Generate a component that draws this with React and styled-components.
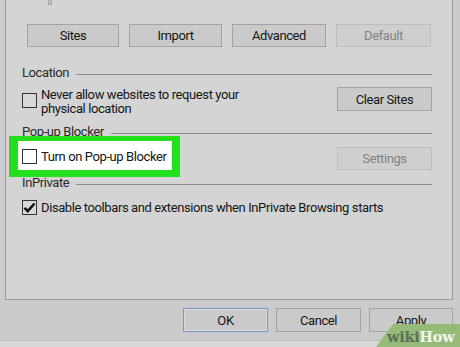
import React from "react";
import styled, { createGlobalStyle, css } from "styled-components";

const Global = createGlobalStyle`
  html, body { margin: 0; padding: 0; }
  body {
    width: 460px;
    height: 347px;
    overflow: hidden;
    background: #cacaca;
    font-family: Roboto, "Segoe UI", sans-serif;
    font-size: 13px;
    letter-spacing: -0.4px;
    color: #161616;
  }
`;

const Page = styled.div`
  position: relative;
  width: 460px;
  height: 347px;
  display: flex;
  flex-direction: column;
  background: #cbcbcb;
  overflow: hidden;
`;

const Panel = styled.div`
  box-sizing: border-box;
  margin-left: 5px;
  width: 448px;
  height: 300px;
  background: #d4d4d4;
  border: 1px solid #9a9a9a;
  border-top: none;
  padding: 0 20px 0 16px;
  display: flex;
  flex-direction: column;
`;

const Stub = styled.div`
  margin-left: 26px;
  width: 4px;
  height: 5px;
  background: #bdbdbd;
  border: 1px solid #a8a8a8;
  border-top: none;
  box-sizing: border-box;
`;

const ButtonRow = styled.div`
  display: flex;
  gap: 10px;
  margin-top: 19px;
  padding-left: 5px;
`;

const Button = styled.div`
  box-sizing: border-box;
  width: ${(p) => p.$w || 93}px;
  height: ${(p) => p.$h || 23}px;
  display: flex;
  align-items: center;
  justify-content: center;
  background: #cacaca;
  border: 1px solid #a3a3a3;
  color: #161616;
  margin-top: ${(p) => p.$mt || 0}px;
  ${(p) =>
    p.$disabled &&
    css`
      background: #cfcfcf;
      border-color: #bdbdbd;
      color: #838383;
    `}
  ${(p) =>
    p.$focus &&
    css`
      border-color: #7b97c6;
      box-shadow: inset 0 0 0 1px #d6dbe3;
    `}
`;

const Header = styled.div`
  display: flex;
  align-items: center;
  gap: 7px;
  height: 12px;
  line-height: 12px;
  margin-top: ${(p) => p.$mt}px;
  color: #2a2a2a;
  &::after {
    content: "";
    flex: 1;
    height: 1px;
    background: #8c8c8c;
    margin-top: 2px;
  }
`;

const Row = styled.div`
  display: flex;
  justify-content: space-between;
  align-items: ${(p) => p.$align || "flex-start"};
  margin-top: ${(p) => p.$mt}px;
`;

const CheckItem = styled.div`
  display: flex;
  align-items: ${(p) => p.$align || "center"};
  gap: 4px;
  padding-top: ${(p) => p.$pt || 0}px;
`;

const Box = styled.div`
  box-sizing: border-box;
  flex: none;
  width: 15px;
  height: 15px;
  border: 1px solid #333;
  background: ${(p) => (p.$white ? "#fff" : "#d8d8d8")};
  margin-top: ${(p) => p.$mt || 0}px;
  display: flex;
  align-items: center;
  justify-content: center;
`;

const Label = styled.div`
  line-height: ${(p) => p.$lh || 14}px;
  white-space: nowrap;
`;

const Highlight = styled.div`
  box-sizing: border-box;
  width: 171px;
  height: 41px;
  margin-left: -13px;
  background: #fff;
  border-style: solid;
  border-color: #22e01c;
  border-width: 5px 8px 7px 9px;
  padding: 2px 0 0 4px;
  display: flex;
  align-items: center;
`;

const Footer = styled.div`
  display: flex;
  justify-content: flex-end;
  gap: 8px;
  margin-top: 8px;
  padding-right: 7px;
`;

const Strip = styled.div`
  margin-top: 8px;
  flex: 1;
  background: #d7d7d7;
  border-top: 1px solid #bcbcbc;
`;

const Logo = styled.div`
  position: absolute;
  right: 0;
  bottom: 0;
  width: 84px;
  height: 23px;
  background: #96bb78;
  clip-path: polygon(17px 0, 100% 0, 100% 100%, 0 100%);
  display: flex;
  align-items: center;
  padding: 1px 0 0 11px;
  box-sizing: border-box;
  font-family: "DejaVu Serif", "Liberation Serif", serif;
  font-weight: bold;
  font-size: 14.5px;
  letter-spacing: -0.3px;
`;

const Wiki = styled.span`
  color: #5f6f55;
`;
const How = styled.span`
  color: #f4f7f0;
`;

const Check = () => (
  <svg width="13" height="13" viewBox="0 0 13 13">
    <path d="M1.5 6.8 L4.8 10.2 L11.5 2.5" fill="none" stroke="#111" strokeWidth="2.6" />
  </svg>
);

export default function App() {
  return (
    <>
      <Global />
      <Page>
        <Panel>
          <Stub />
          <ButtonRow>
            <Button $w={92}>Sites</Button>
            <Button>Import</Button>
            <Button $w={94}>Advanced</Button>
            <Button $w={95} $disabled>Default</Button>
          </ButtonRow>

          <Header $mt={20}>Location</Header>
          <Row $mt={8}>
            <CheckItem $align="flex-start" $pt={1}>
              <Box $mt={5} />
              <Label>
                Never allow websites to request your
                <br />
                physical location
              </Label>
            </CheckItem>
            <Button $w={95} $h={24}>Clear Sites</Button>
          </Row>

          <Header $mt={10}>Pop-up Blocker</Header>
          <Row $mt={-2}>
            <Highlight>
              <CheckItem>
                <Box $white />
                <Label>Turn on Pop-up Blocker</Label>
              </CheckItem>
            </Highlight>
            <Button $w={95} $mt={11} $disabled>Settings</Button>
          </Row>

          <Header $mt={0}>InPrivate</Header>
          <Row $mt={11} $align="center">
            <CheckItem>
              <Box>
                <Check />
              </Box>
              <Label>Disable toolbars and extensions when InPrivate Browsing starts</Label>
            </CheckItem>
          </Row>
        </Panel>

        <Footer>
          <Button $w={85} $h={24} $focus>OK</Button>
          <Button $w={85} $h={24}>Cancel</Button>
          <Button $w={84} $h={24}>Apply</Button>
        </Footer>
        <Strip />
        <Logo>
          <Wiki>wiki</Wiki>
          <How>How</How>
        </Logo>
      </Page>
    </>
  );
}
